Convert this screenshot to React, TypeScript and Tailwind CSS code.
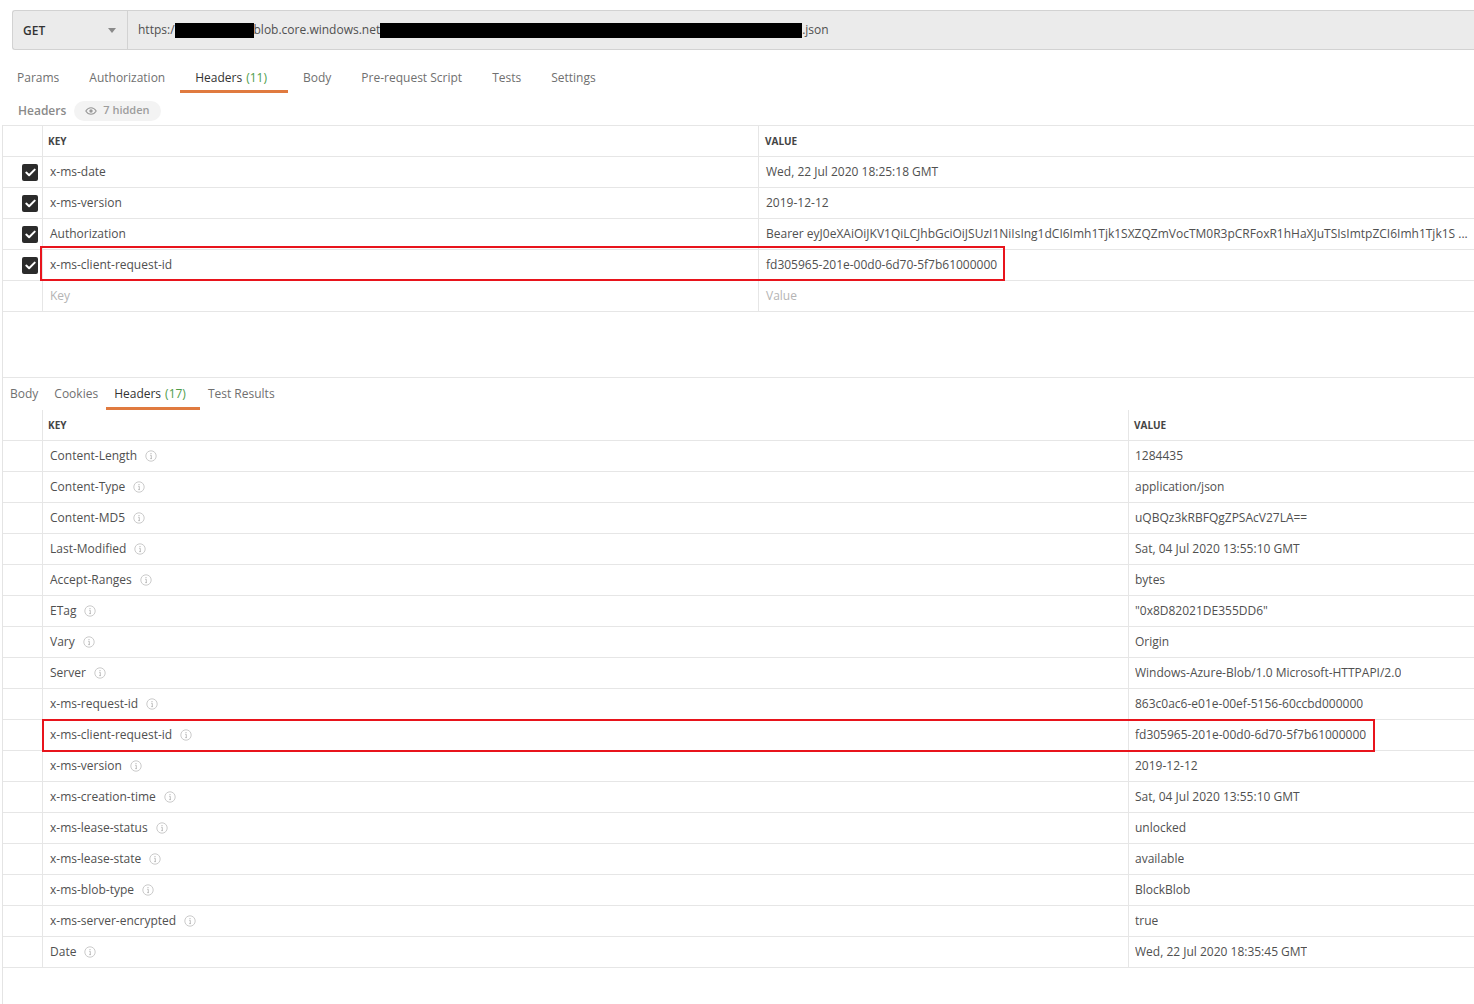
import React from "react";

const reqRows = [
  { k: "x-ms-date", v: "Wed, 22 Jul 2020 18:25:18 GMT" },
  { k: "x-ms-version", v: "2019-12-12" },
  {
    k: "Authorization",
    v: "Bearer eyJ0eXAiOiJKV1QiLCJhbGciOiJSUzI1NiIsIng1dCI6Imh1Tjk1SXZQZmVocTM0R3pCRFoxR1hHaXJuTSIsImtpZCI6Imh1Tjk1S ...",
  },
  { k: "x-ms-client-request-id", v: "fd305965-201e-00d0-6d70-5f7b61000000" },
];

const resRows = [
  ["Content-Length", "1284435"],
  ["Content-Type", "application/json"],
  ["Content-MD5", "uQBQz3kRBFQgZPSAcV27LA=="],
  ["Last-Modified", "Sat, 04 Jul 2020 13:55:10 GMT"],
  ["Accept-Ranges", "bytes"],
  ["ETag", '"0x8D82021DE355DD6"'],
  ["Vary", "Origin"],
  ["Server", "Windows-Azure-Blob/1.0 Microsoft-HTTPAPI/2.0"],
  ["x-ms-request-id", "863c0ac6-e01e-00ef-5156-60ccbd000000"],
  ["x-ms-client-request-id", "fd305965-201e-00d0-6d70-5f7b61000000"],
  ["x-ms-version", "2019-12-12"],
  ["x-ms-creation-time", "Sat, 04 Jul 2020 13:55:10 GMT"],
  ["x-ms-lease-status", "unlocked"],
  ["x-ms-lease-state", "available"],
  ["x-ms-blob-type", "BlockBlob"],
  ["x-ms-server-encrypted", "true"],
  ["Date", "Wed, 22 Jul 2020 18:35:45 GMT"],
];

function InfoIcon() {
  return (
    <svg width="12" height="12" viewBox="0 0 12 12" className="ml-[8px] shrink-0">
      <circle cx="6" cy="6" r="5.2" fill="none" stroke="#c4c4c4" strokeWidth="0.9" />
      <circle cx="6" cy="3.6" r="0.7" fill="#b8b8b8" />
      <path d="M5.2 5.3 H6.3 V8.6 M5.2 8.6 H7" fill="none" stroke="#b8b8b8" strokeWidth="0.9" />
    </svg>
  );
}

function Check() {
  return (
    <div className="w-[16px] h-[17px] rounded-[2px] bg-[#2b2b2b] flex items-center justify-center">
      <svg width="11" height="9" viewBox="0 0 11 9">
        <path d="M1.3 4.6 L4.1 7.2 L9.7 1.6" fill="none" stroke="#fff" strokeWidth="2" strokeLinecap="round" strokeLinejoin="round" />
      </svg>
    </div>
  );
}

function EyeIcon() {
  return (
    <svg width="12" height="8" viewBox="0 0 12 8">
      <path d="M0.8 4 C2.4 1.3 4 0.7 6 0.7 C8 0.7 9.6 1.3 11.2 4 C9.6 6.7 8 7.3 6 7.3 C4 7.3 2.4 6.7 0.8 4 Z" fill="none" stroke="#9a9a9a" strokeWidth="1.1" />
      <circle cx="6" cy="4" r="1.7" fill="#9a9a9a" />
    </svg>
  );
}

export default function App() {
  const reqTabs = ["Params", "Authorization", "Headers", "Body", "Pre-request Script", "Tests", "Settings"];
  const resTabs = ["Body", "Cookies", "Headers", "Test Results"];
  return (
    <div className="relative w-[1474px] h-[1004px] overflow-hidden bg-white font-['Open_Sans',sans-serif] text-[12px] text-[#505050]">
      {/* URL bar */}
      <div className="pt-[10px] pl-[12px]">
        <div className="flex h-[40px] border border-r-0 border-[#d2d2d2] rounded-l-[3px] bg-[#ebebeb]">
          <div className="w-[115px] shrink-0 flex items-center justify-between pl-[10px] pr-[11px] pt-[1px] border-r border-[#d2d2d2]">
            <span className="font-semibold text-[#333] text-[12px]">GET</span>
            <svg width="8" height="5" viewBox="0 0 8 5">
              <path d="M0 0 H8 L4 5 Z" fill="#8a8a8a" />
            </svg>
          </div>
          <div className="flex items-center pl-[10px] text-[#505050] whitespace-nowrap">
            <span>https:/</span>
            <span className="inline-block w-[79px] h-[15px] bg-black" />
            <span>blob.core.windows.net</span>
            <span className="inline-block w-[422px] h-[15px] bg-black" />
            <span>.json</span>
          </div>
        </div>
      </div>

      {/* Request tabs */}
      <div className="flex mt-[10px] pl-[2px] h-[33px]">
        {reqTabs.map((t) => (
          <div
            key={t}
            className={
              t === "Headers"
                ? "px-[15px] pt-[5px] flex items-center border-b-[3px] border-[#e07a3f] text-[#333]"
                : "px-[15px] pt-[5px] flex items-center border-b-[3px] border-transparent text-[#707070]"
            }
          >
            {t}
            {t === "Headers" && <span className="ml-[4px] mr-[6px] text-[#4f9d4a]">(11)</span>}
          </div>
        ))}
      </div>

      {/* Headers label row */}
      <div className="h-[32px] flex items-center pl-[18px] pt-[3px]">
        <span className="font-semibold text-[#8a8a8a]">Headers</span>
        <div className="ml-[8px] h-[20px] pl-[11px] pr-[11px] rounded-full bg-[#f3f3f3] flex items-center gap-[6px] text-[11px] font-semibold text-[#9d9d9d]">
          <EyeIcon />
          <span>7 hidden</span>
        </div>
      </div>

      {/* Main area with left border */}
      <div className="ml-[2px] border-l border-[#e4e4e4] h-[900px]">
        {/* Request table */}
        <div className="border-t border-[#e6e6e6]">
          <div className="flex h-[31px] border-b border-[#e6e6e6]">
            <div className="w-[40px] shrink-0 border-r border-[#e6e6e6]" />
            <div className="w-[716px] shrink-0 border-r border-[#e6e6e6] flex items-center pl-[5px] text-[10px] font-bold text-[#444]">KEY</div>
            <div className="flex-1 flex items-center pl-[6px] text-[10px] font-bold text-[#444]">VALUE</div>
          </div>
          {reqRows.map((r) => (
            <div key={r.k} className="flex h-[31px] border-b border-[#e6e6e6]">
              <div className="w-[40px] shrink-0 border-r border-[#e6e6e6] flex items-center pl-[19px]">
                <Check />
              </div>
              <div className="w-[716px] shrink-0 border-r border-[#e6e6e6] flex items-center pl-[7px]">{r.k}</div>
              <div className="flex-1 min-w-0 flex items-center pl-[7px] overflow-hidden">
                <span className="whitespace-nowrap">{r.v}</span>
              </div>
            </div>
          ))}
          <div className="flex h-[31px] border-b border-[#e6e6e6]">
            <div className="w-[40px] shrink-0 border-r border-[#e6e6e6]" />
            <div className="w-[716px] shrink-0 border-r border-[#e6e6e6] flex items-center pl-[7px] text-[#b4b4b4]">Key</div>
            <div className="flex-1 flex items-center pl-[7px] text-[#b4b4b4]">Value</div>
          </div>
        </div>

        {/* Response section */}
        <div className="mt-[65px] border-t border-[#e6e6e6]">
          <div className="flex h-[32px] -ml-[1px]">
            {resTabs.map((t) => (
              <div
                key={t}
                className={
                  t === "Headers"
                    ? "px-[8px] pt-[2px] flex items-center border-b-[3px] border-[#e07a3f] text-[#333]"
                    : "px-[8px] pt-[2px] flex items-center border-b-[3px] border-transparent text-[#707070]"
                }
              >
                {t}
                {t === "Headers" && <span className="ml-[4px] mr-[6px] text-[#4f9d4a]">(17)</span>}
              </div>
            ))}
          </div>
          <div className="flex h-[31px] border-b border-[#e6e6e6]">
            <div className="w-[40px] shrink-0 border-r border-[#e6e6e6]" />
            <div className="w-[1086px] shrink-0 border-r border-[#e6e6e6] flex items-center pl-[5px] text-[10px] font-bold text-[#444]">KEY</div>
            <div className="flex-1 flex items-center pl-[5px] text-[10px] font-bold text-[#444]">VALUE</div>
          </div>
          {resRows.map(([k, v]) => (
            <div key={k} className="flex h-[31px] border-b border-[#e6e6e6]">
              <div className="w-[40px] shrink-0 border-r border-[#e6e6e6]" />
              <div className="w-[1086px] shrink-0 border-r border-[#e6e6e6] flex items-center pl-[7px]">
                <span>{k}</span>
                <InfoIcon />
              </div>
              <div className="flex-1 min-w-0 flex items-center pl-[6px]">
                <span className="truncate">{v}</span>
              </div>
            </div>
          ))}
        </div>
      </div>

      {/* Annotation boxes */}
      <div className="absolute left-[40px] top-[246px] w-[965px] h-[35px] border-2 border-[#e8141c] pointer-events-none" />
      <div className="absolute left-[42px] top-[719px] w-[1333px] h-[33px] border-2 border-[#e8141c] pointer-events-none" />
    </div>
  );
}
